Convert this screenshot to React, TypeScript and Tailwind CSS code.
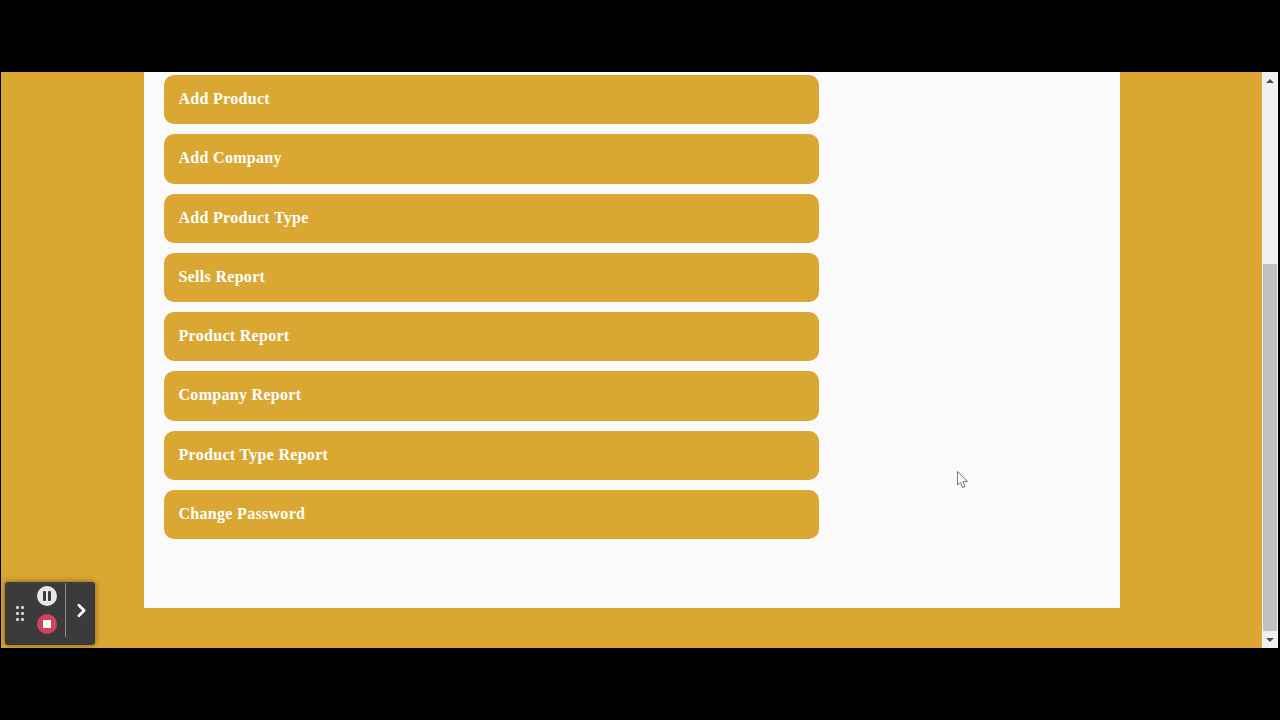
import { ChevronRight } from "lucide-react"

const items = [
  "Add Product",
  "Add Company",
  "Add Product Type",
  "Sells Report",
  "Product Report",
  "Company Report",
  "Product Type Report",
  "Change Password",
]

function Scrollbar() {
  return (
    <div className="flex w-[18px] shrink-0 flex-col items-start border-r-2 border-black bg-[#f1f1f1]">
      <div className="flex h-[17px] w-full items-center justify-center">
        <div className="h-0 w-0 border-x-[4px] border-b-[4px] border-x-transparent border-b-[#505050]" />
      </div>
      <div className="ml-px mt-[175px] h-[367px] w-[14px] bg-[#c1c1c1]" />
      <div className="flex h-[17px] w-full items-center justify-center">
        <div className="h-0 w-0 border-x-[4px] border-t-[4px] border-x-transparent border-t-[#505050]" />
      </div>
    </div>
  )
}

function Recorder() {
  return (
    <div className="absolute left-[4px] top-[510px] flex h-[63px] w-[90px] items-center rounded-[3px] bg-[#3b3b3b] pb-[7px] shadow-[0_0_6px_rgba(0,0,0,0.45)]">
      <div className="ml-[11px] mt-[7px] grid grid-cols-2 gap-x-[2px] gap-y-[3px]">
        {[0, 1, 2, 3, 4, 5].map((i) => (
          <span key={i} className="h-[3px] w-[3px] rounded-[1px] bg-[#d4d4d4]" />
        ))}
      </div>
      <div className="ml-[13px] flex flex-col gap-[8px]">
        <div className="flex h-[20px] w-[20px] items-center justify-center gap-[2px] rounded-full bg-[#e8e8e8]">
          <span className="h-[10px] w-[3px] rounded-[1px] bg-[#3b3b3b]" />
          <span className="h-[10px] w-[3px] rounded-[1px] bg-[#3b3b3b]" />
        </div>
        <div className="flex h-[20px] w-[20px] items-center justify-center rounded-full bg-[#d0435f]">
          <span className="h-[8px] w-[8px] bg-white" />
        </div>
      </div>
      <div className="ml-[8px] h-[54px] w-px bg-[#8a8a8a]" />
      <ChevronRight className="ml-[5px] h-[21px] w-[21px] text-white" strokeWidth={3} />
    </div>
  )
}

function Cursor() {
  return (
    <svg className="absolute left-[955px] top-[398px]" width="14" height="20" viewBox="0 0 14 20">
      <path
        d="M1.5 1.5 L1.5 15 L4.6 12.4 L6.6 17.5 L9 16.5 L7 11.6 L11.5 11.4 Z"
        fill="#fafafa"
        stroke="#777"
        strokeWidth="1"
      />
    </svg>
  )
}

export default function App() {
  return (
    <div className="flex h-[720px] w-[1280px] flex-col bg-black font-['Liberation_Serif',serif]">
      <div className="h-[72px] shrink-0" />
      <div className="relative flex h-[576px] shrink-0 border-l border-black bg-[#dba733]">
        <div className="flex-1">
          <div className="ml-[143px] h-[536px] w-[976px] bg-[#fafafa] pl-[20px] pt-[3px]">
            <div className="flex w-[655px] flex-col gap-[10px]">
              {items.map((item) => (
                <div
                  key={item}
                  className="flex h-[49.25px] items-center rounded-[10px] bg-[#dba733] pb-[1px] pl-[14.5px] text-[16px] font-bold tracking-[0.3px] text-white"
                >
                  {item}
                </div>
              ))}
            </div>
          </div>
        </div>
        <Scrollbar />
        <Recorder />
        <Cursor />
      </div>
      <div className="h-[72px] shrink-0" />
    </div>
  )
}
